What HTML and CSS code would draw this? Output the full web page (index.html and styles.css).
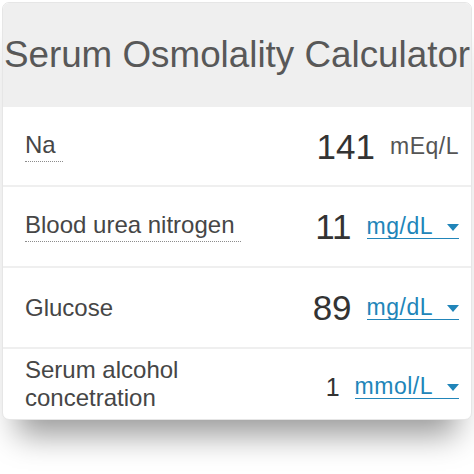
FILE: index.html
```html
<!DOCTYPE html>
<html lang="en">
<head>
<meta charset="utf-8">
<title>Serum Osmolality Calculator</title>
<link rel="stylesheet" href="styles.css">
</head>
<body>
<div class="card">
  <header class="head">
    <h1 class="title">Serum Osmolality Calculator</h1>
  </header>
  <div class="row">
    <span class="label label--tip">Na</span>
    <div class="value">
      <span class="num">141</span>
      <span class="unit unit--static">mEq/L</span>
    </div>
  </div>
  <div class="row">
    <span class="label label--tip">Blood urea nitrogen</span>
    <div class="value">
      <span class="num">11</span>
      <a class="unit unit--link">mg/dL<span class="caret"></span></a>
    </div>
  </div>
  <div class="row">
    <span class="label">Glucose</span>
    <div class="value">
      <span class="num">89</span>
      <a class="unit unit--link">mg/dL<span class="caret"></span></a>
    </div>
  </div>
  <div class="row row--last">
    <span class="label label--wrap">Serum alcohol concetration</span>
    <div class="value value--low">
      <span class="num num--small">1</span>
      <a class="unit unit--link">mmol/L<span class="caret"></span></a>
    </div>
  </div>
</div>
</body>
</html>
```
FILE: styles.css
```css
* { box-sizing: border-box; }

html, body {
  margin: 0;
  padding: 0;
  background: #ffffff;
}

body {
  font-family: "Liberation Sans", Arial, Helvetica, sans-serif;
  width: 474px;
  height: 474px;
  overflow: hidden;
}

.card {
  margin: 2px;
  width: 470px;
  border: 1px solid #e6e6e6;
  border-radius: 7px;
  overflow: hidden;
  background: #ffffff;
  box-shadow: 0 30px 30px -15px rgba(0, 0, 0, 0.4);
}

.head {
  height: 104px;
  background: #efefef;
  display: flex;
  align-items: center;
  justify-content: center;
}

.title {
  margin: 0;
  font-weight: normal;
  font-size: 36.8px;
  line-height: 1;
  color: #585858;
  white-space: nowrap;
}

.row {
  display: flex;
  align-items: center;
  justify-content: space-between;
  height: 81px;
  padding: 0 12px 0 22px;
  border-top: 2px solid #efefef;
}

.head + .row {
  border-top: 0;
  height: 78px;
}

.row--last {
  height: 72px;
}

.label {
  display: inline-block;
  font-size: 24px;
  line-height: 28px;
  color: #464646;
  max-width: 230px;
}

.label--tip {
  padding-right: 7px;
  padding-bottom: 2px;
  border-bottom: 1px dotted #8c8c8c;
}

.value {
  display: flex;
  align-items: center;
  gap: 15px;
  flex: none;
}

.value--low {
  margin-top: 6px;
}

.num {
  font-size: 35px;
  line-height: 1;
  color: #333333;
}

.num--small {
  font-size: 25px;
}

.unit {
  display: inline-block;
  font-size: 23px;
  line-height: 23px;
}

.unit--static {
  color: #555555;
  letter-spacing: 0.5px;
}

.unit--link {
  color: #2185b9;
  letter-spacing: 0.5px;
  border-bottom: 1px solid #2185b9;
  text-decoration: none;
}

.caret {
  display: inline-block;
  vertical-align: middle;
  width: 0;
  height: 0;
  margin-left: 14px;
  border-left: 6px solid transparent;
  border-right: 6px solid transparent;
  border-top: 7px solid #2185b9;
}
```
